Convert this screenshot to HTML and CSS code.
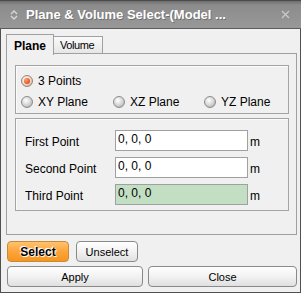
FILE: index.html
```html
<!DOCTYPE html>
<html lang="en">
<head>
  <meta charset="UTF-8">
  <title>Plane &amp; Volume Select</title>
  <link rel="stylesheet" href="styles.css">
</head>
<body>
  <div class="window">
    <!-- Title bar -->
    <header class="titlebar">
      <svg class="title-icon" width="8" height="10" viewBox="0 0 8 10">
        <path d="M1 4 L4 1 L7 4" fill="none" stroke="#d8d8d8" stroke-width="1.4"/>
        <path d="M1 6 L4 9 L7 6" fill="none" stroke="#d8d8d8" stroke-width="1.4"/>
      </svg>
      <span class="title-text">Plane &amp; Volume Select-(Model ...</span>
      <svg class="title-close" width="9" height="9" viewBox="0 0 9 9">
        <path d="M1 1 L8 8 M8 1 L1 8" stroke="#c9c9c9" stroke-width="1.3"/>
      </svg>
    </header>

    <div class="content">
      <!-- Tabs -->
      <div class="tabs">
        <div class="tab active">Plane</div>
        <div class="tab">Volume</div>
      </div>

      <section class="tab-panel">
        <div class="group modes">
          <label class="radio-row">
            <span class="radio checked"></span>3 Points
          </label>
          <div class="radio-grid">
            <label class="radio-row"><span class="radio"></span>XY Plane</label>
            <label class="radio-row"><span class="radio"></span>XZ Plane</label>
            <label class="radio-row"><span class="radio"></span>YZ Plane</label>
          </div>
        </div>

        <div class="group points">
          <div class="point-row">
            <span class="point-label">First Point</span>
            <input class="point-input" type="text" value="0, 0, 0">
            <span class="unit">m</span>
          </div>
          <div class="point-row">
            <span class="point-label">Second Point</span>
            <input class="point-input" type="text" value="0, 0, 0">
            <span class="unit">m</span>
          </div>
          <div class="point-row">
            <span class="point-label">Third Point</span>
            <input class="point-input current" type="text" value="0, 0, 0">
            <span class="unit">m</span>
          </div>
        </div>
      </section>

      <!-- Buttons -->
      <div class="btn-row small">
        <button class="btn btn-select">Select</button>
        <button class="btn">Unselect</button>
      </div>
      <div class="btn-row wide">
        <button class="btn btn-apply">Apply</button>
        <button class="btn btn-close">Close</button>
      </div>
    </div>
  </div>
</body>
</html>
```

FILE: styles.css
```css
* {
  margin: 0;
  padding: 0;
  box-sizing: border-box;
}

body {
  font-family: 'Liberation Sans', Arial, sans-serif;
  font-size: 12px;
  color: #000;
  background: #f0f0f0;
}

/* Window frame */
.window {
  width: 301px;
  height: 293px;
  border: 1px solid #505050;
  border-top: none;
  background: #f0f0f0;
}

/* Title bar */
.titlebar {
  height: 29px;
  display: flex;
  align-items: center;
  padding: 0 11px 0 9px;
  background: linear-gradient(#6e6e6e, #8c8c8c 15%, #989898);
  border-top: 1px solid #4a4a4a;
  border-bottom: 1px solid #5c5c5c;
  margin: 0 -1px;
}

.title-icon {
  margin-left: 1px;
  margin-right: 8px;
}

.title-text {
  flex: 1;
  color: #fff;
  font-weight: bold;
  font-size: 13px;
  text-shadow: 1px 1px 0 rgba(0, 0, 0, 0.25);
  white-space: nowrap;
}

/* Content */
.content {
  padding: 5px 3px 0 5px;
}

.tabs {
  display: flex;
  align-items: flex-end;
  height: 19px;
}

.tab {
  height: 17px;
  padding: 0 8px 0 6px;
  border: 1px solid #a0a0a0;
  border-bottom: none;
  border-left: none;
  background: linear-gradient(#fafafa, #e6e6e6);
  font-size: 11px;
  letter-spacing: -0.4px;
  line-height: 16px;
  width: 49px;
}

.tab.active {
  position: relative;
  z-index: 2;
  height: 21px;
  width: 48px;
  margin-bottom: -2px;
  border-left: 1px solid #a0a0a0;
  background: #f0f0f0;
  font-size: 12px;
  letter-spacing: 0;
  font-weight: bold;
  line-height: 22px;
  padding-left: 7px;
}

.tab-panel {
  height: 182px;
  border: 1px solid #a0a0a0;
  padding: 11px 7px 0 8px;
}

.group {
  border: 1px solid #a4a4a4;
  box-shadow: inset 1px 1px 0 #fbfbfb;
}

/* Radio group */
.modes {
  height: 49px;
  padding: 5px 0 0 5px;
}

.radio-grid {
  display: grid;
  grid-template-columns: 92px 91px auto;
  margin-top: 1px;
}

.radio-row {
  display: flex;
  align-items: center;
  height: 20px;
}

.radio {
  width: 12px;
  height: 12px;
  border-radius: 50%;
  border: 1px solid #8c8c8c;
  background: radial-gradient(circle at 40% 35%, #ffffff, #d2d2d2 55%, #9c9c9c);
  margin-right: 5px;
  display: flex;
  align-items: center;
  justify-content: center;
}

.radio.checked {
  border-color: #a08070;
  background: radial-gradient(circle at 40% 35%, #ffffff, #e6d8d0 55%, #b09a90);
}

.radio.checked::after {
  content: '';
  width: 6px;
  height: 6px;
  border-radius: 50%;
  background: radial-gradient(circle at 35% 35%, #ffa070, #f05a1e 60%, #c03a10);
}

/* Point inputs */
.points {
  margin-top: 4px;
  height: 93px;
  padding: 11px 0 0 9px;
  display: flex;
  flex-direction: column;
  gap: 6px;
}

.point-row {
  display: flex;
  align-items: center;
  height: 21px;
}

.point-label {
  width: 90px;
  padding-top: 3px;
}

.point-input {
  width: 133px;
  height: 21px;
  border: 1px solid #a0a0a0;
  background: #fff;
  font-family: 'Liberation Sans', Arial, sans-serif;
  font-size: 12px;
  padding: 0 0 3px 2px;
  outline: none;
}

.point-input.current {
  background: #c3dfc3;
}

.unit {
  margin-left: 2px;
  padding-top: 3px;
}

/* Buttons */
.btn-row {
  display: flex;
  padding-left: 1px;
}

.btn-row.small {
  margin-top: 6px;
  gap: 7px;
}

.btn-row.wide {
  margin-top: 4px;
  gap: 5px;
}

.btn {
  height: 21px;
  width: 62px;
  border: 1px solid #8a8a8a;
  border-radius: 4px;
  background: linear-gradient(#ffffff, #f2f2f2 50%, #e0e0e0);
  font-family: 'Liberation Sans', Arial, sans-serif;
  font-size: 11px;
  color: #000;
}

.btn-select {
  border-color: #c88a3a;
  background: linear-gradient(#ffc36e, #ffa43a 50%, #f5961e);
  font-weight: bold;
  font-size: 12px;
  text-shadow: 0 0 2px #fff, 1px 1px 0 #fff, -1px -1px 0 #fff;
}

.btn-apply {
  width: 136px;
}

.btn-close {
  width: 149px;
}
```
